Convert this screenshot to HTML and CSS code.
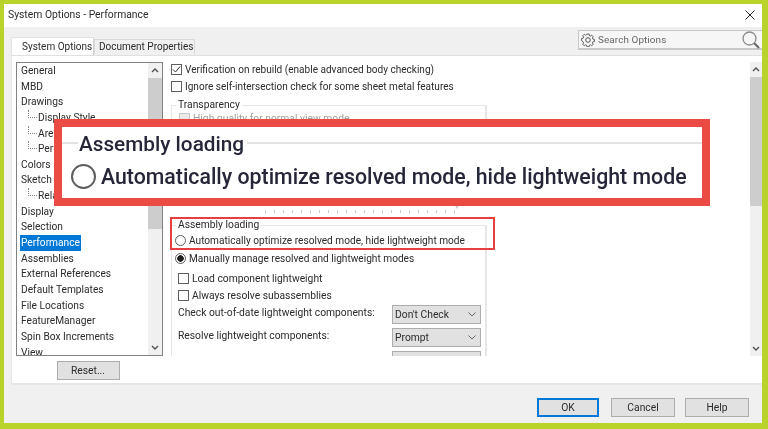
FILE: index.html
```html
<!DOCTYPE html>
<html lang="en">
<head>
<meta charset="utf-8">
<title>System Options - Performance</title>
<link rel="stylesheet" href="styles.css">
</head>
<body>
<div class="window">
  <header class="titlebar">
    <span>System Options - Performance</span>
    <svg class="close" viewBox="0 0 10 10" width="10" height="10"><path d="M0.5 0.5L9.5 9.5M9.5 0.5L0.5 9.5" stroke="#222" stroke-width="1" fill="none"/></svg>
  </header>
  <div class="tabrow">
    <div class="tab active">System Options</div>
    <div class="tab">Document Properties</div>
    <div class="search">
      <svg class="gear" viewBox="0 0 14 14" width="14" height="14"><path d="M5.8 1h2.4l.3 1.7 1.1.5 1.5-1 1.6 1.7-1 1.4.5 1.1 1.7.3v2.4l-1.7.3-.5 1.1 1 1.5-1.7 1.6-1.4-1-1.1.5-.3 1.6H5.800l-.3-1.6-1.100-.5-1.500 1-1.600-1.700 1-1.400-.5-1.100L.1 8.200V5.800l1.700-.3.5-1.100-1-1.500L3 1.200l1.400 1 1.100-.5z" transform="translate(.5 .1) scale(.93)" fill="none" stroke="#555" stroke-width="1"/><circle cx="7" cy="7" r="2.300" fill="none" stroke="#555" stroke-width="1"/></svg>
      <span class="search-text">Search Options</span>
      <svg class="lens" viewBox="0 0 18 18" width="18" height="18"><circle cx="7.500" cy="7.500" r="6.500" fill="none" stroke="#8a8a8a" stroke-width="1.300"/><path d="M12.300 12.300L17 17" stroke="#666" stroke-width="2"/></svg>
    </div>
  </div>
  <section class="panel">
    <div class="left">
      <div class="list">
        <ul class="tree">
          <li>General</li>
          <li>MBD</li>
          <li>Drawings</li>
          <li class="sub">Display Style</li>
          <li class="sub">Area Hatch/Fill</li>
          <li class="sub">Performance</li>
          <li>Colors</li>
          <li>Sketch</li>
          <li class="sub">Relations/Snaps</li>
          <li>Display</li>
          <li>Selection</li>
          <li><span class="selected">Performance</span></li>
          <li>Assemblies</li>
          <li>External References</li>
          <li>Default Templates</li>
          <li>File Locations</li>
          <li>FeatureManager</li>
          <li>Spin Box Increments</li>
          <li>View</li>
        </ul>
        <div class="scrollbar short">
          <svg class="arrow" viewBox="0 0 8 5" width="8" height="5"><path d="M1 4L4 1L7 4" fill="none" stroke="#505050" stroke-width="1.400"/></svg>
          <div class="thumb list-thumb"></div>
          <svg class="arrow end" viewBox="0 0 8 5" width="8" height="5"><path d="M1 1L4 4L7 1" fill="none" stroke="#505050" stroke-width="1.400"/></svg>
        </div>
      </div>
      <button class="btn reset">Reset...</button>
    </div>
    <div class="main">
      <div class="options">
        <label class="row first"><i class="check on"><svg viewBox="0 0 11 11" width="11" height="11"><path d="M2 5.500L4.500 8L9 2.500" fill="none" stroke="#333" stroke-width="1"/></svg></i>Verification on rebuild (enable advanced body checking)</label>
        <label class="row second"><i class="check"></i>Ignore self-intersection check for some sheet metal features</label>
        <fieldset class="group transparency">
          <legend>Transparency</legend>
          <label class="row faded"><i class="check dim"></i>High quality for normal view mode</label>
          <div class="ticks"></div>
          <div class="tick-mark"></div>
        </fieldset>
        <fieldset class="group assembly">
          <legend>Assembly loading</legend>
          <label class="row radio-row"><i class="radio"></i>Automatically optimize resolved mode, hide lightweight mode</label>
          <label class="row radio-row two"><i class="radio on"></i>Manually manage resolved and lightweight modes</label>
          <label class="row inner load"><i class="check"></i>Load component lightweight</label>
          <label class="row inner always"><i class="check"></i>Always resolve subassemblies</label>
          <div class="field check-field"><span>Check out-of-date lightweight components:</span><div class="select">Don't Check<svg viewBox="0 0 8 5" width="8" height="5"><path d="M.5 .5L4 4L7.500 .5" fill="none" stroke="#666" stroke-width="1"/></svg></div></div>
          <div class="field"><span>Resolve lightweight components:</span><div class="select">Prompt<svg viewBox="0 0 8 5" width="8" height="5"><path d="M.5 .5L4 4L7.500 .5" fill="none" stroke="#666" stroke-width="1"/></svg></div></div>
          <div class="field"><span></span><div class="select"></div></div>
        </fieldset>
      </div>
      <div class="scrollbar">
        <svg class="arrow" viewBox="0 0 8 5" width="8" height="5"><path d="M1 4L4 1L7 4" fill="none" stroke="#505050" stroke-width="1.400"/></svg>
        <div class="thumb main-thumb"></div>
        <svg class="arrow end" viewBox="0 0 8 5" width="8" height="5"><path d="M1 1L4 4L7 1" fill="none" stroke="#505050" stroke-width="1.400"/></svg>
      </div>
    </div>
  </section>
  <footer class="footer">
    <button class="btn ok">OK</button>
    <button class="btn">Cancel</button>
    <button class="btn">Help</button>
  </footer>
</div>
<div class="highlight"></div>
<aside class="callout">
  <div class="callout-legend"><span>Assembly loading</span></div>
  <div class="callout-option"><i class="callout-radio"></i>Automatically optimize resolved mode, hide lightweight mode</div>
</aside>
</body>
</html>
```
FILE: styles.css
```css
* { box-sizing: border-box; }
html, body { margin: 0; height: 429px; overflow: hidden; }
body {
  position: relative;
  background: #b9d32b;
  padding: 4px 6px 6px 4px;
  font-family: Roboto, "Open Sans", sans-serif;
  font-size: 10.3px;
  color: #2b2b2b;
  filter: blur(.3px);
}
.window { height: 419px; background: #f0f0f0; display: flex; flex-direction: column; }
.titlebar {
  height: 23px; flex: none; background: #fff; padding: 0 4px 2px;
  display: flex; align-items: center; justify-content: space-between;
  font-size: 10.35px;
}
.close { margin-right: 3px; }
.tabrow { height: 28px; flex: none; display: flex; align-items: flex-end; padding-left: 7px; font-size: 10px; }
.tab {
  height: 15px; padding: 0 1px 0 4px; background: #f0f0f0; white-space: nowrap;
  border: 1px solid #d9d9d9; border-bottom: 0;
  line-height: 14px; margin-bottom: 1px;
}
.tab.active { height: 18px; width: 83px; background: #fff; margin-bottom: 0; padding: 0 0 0 10px; line-height: 17px; border-color: #e2e2e2; border-right-color: #d4d4d4; }
.search {
  margin-left: auto; align-self: flex-start; margin-top: 3px; width: 184px; height: 20px;
  background: #f6f6f6; border: 1px solid #c8c8c8; border-right: 0; border-bottom-width: 2px;
  display: flex; align-items: center; padding: 0 2px; color: #666; font-size: 9.9px;
}
.search-text { margin-left: 3px; letter-spacing: .1px; }
.lens { margin-left: auto; }
.panel {
  height: 330px; flex: none; margin-left: 7px; background: #fff;
  border-top: 1px solid #e0e0e0; border-left: 1px solid #e6e6e6; border-bottom: 2px solid #e6e6e6;
  display: flex; padding: 6px 0 0 4px;
}
.left { width: 147px; flex: none; display: flex; flex-direction: column; }
.list { height: 294px; flex: none; border: 1px solid #828282; display: flex; overflow: hidden; }
.tree { flex: 1; list-style: none; margin: 0; padding: 0 0 0 4px; overflow: hidden; font-size: 10.2px; }
.tree li { height: 15.65px; line-height: 15.65px; white-space: nowrap; }
.tree li.sub { padding-left: 17px; position: relative; overflow: hidden; }
.tree li.sub::before {
  content: ""; position: absolute; left: 7px; top: 7px; width: 9px; border-top: 1px dotted #888;
}
.tree li.sub::after {
  content: ""; position: absolute; left: 7px; top: 0; height: 8px; border-left: 1px dotted #888;
}
.selected { display: inline-block; background: #0078d7; color: #fff; padding: 0 1px; margin-left: -1px; height: 15.65px; }
.scrollbar { width: 12px; flex: none; background: #f0f0f0; display: flex; flex-direction: column; align-items: center; }
.short { height: 292px; width: 14px; }
.arrow { margin-top: 5px; flex: none; }
.arrow.end { margin-top: auto; margin-bottom: 5px; }
.thumb { width: 100%; background: #cdcdcd; margin-top: 5px; flex: none; }
.list-thumb { height: 151px; }
.main-thumb { height: 129px; }
.reset { align-self: center; margin-top: 5px; margin-left: -3px; }
.btn {
  width: 63px; height: 19px; padding: 0; background: #e1e1e1; border: 1px solid #adadad;
  font: inherit; color: #2b2b2b; line-height: 15px;
}
.main { flex: 1; height: 294px; display: flex; margin-left: 1px; min-width: 0; overflow: hidden; }
.options { flex: 1; padding-left: 7px; overflow: hidden; min-width: 0; }
.row { display: flex; align-items: center; white-space: nowrap; height: 12px; }
.first { margin-top: 1px; font-size: 10.05px; }
.second { margin-top: 5px; font-size: 10.05px; }
.check { width: 11px; height: 11px; border: 1px solid #5e5e5e; background: #fff; flex: none; margin-right: 3px; display: block; position: relative; }
.check svg { position: absolute; left: -1px; top: -1px; }
.check.dim { border-color: #c9c9c9; background: #e9e9e9; }
.faded { color: #a0a0a0; }
.group { width: 316px; margin: 0; padding: 0 0 0 7px; border: 2px solid #e6e6e6; border-width: 1px 2px 2px 1px; display: block; min-width: 0; }
.group legend { padding: 0 2px; line-height: 14px; }
.transparency { margin-top: 6px; height: 98px; position: relative; }
.transparency legend { margin-left: -3px; }
.ticks { position: absolute; left: 93px; top: 98px; width: 192px; height: 3px; background: repeating-linear-gradient(90deg, #c8c8c8 0 1px, transparent 1px 9px); }
.tick-mark { position: absolute; left: 282px; top: 92px; border: 3px solid transparent; border-top: 5px solid #cfcfcf; border-bottom: 0; }
.assembly { margin-top: 22px; height: 150px; padding-left: 3px; overflow: hidden; }
.assembly legend { margin-left: 1px; }
.radio-row { margin-top: 1px; height: 14px; font-size: 10.15px; }
.radio-row.two { margin-top: 4px; }
.radio { width: 11px; height: 11px; border: 1px solid #5e5e5e; border-radius: 50%; background: #fff; flex: none; margin-right: 3px; display: block; }
.radio.on { background: radial-gradient(circle, #222 0 3px, #fff 3.5px); }
.inner { margin-left: 3px; margin-top: 5px; }
.inner.load { margin-top: 7px; }
.field { display: flex; justify-content: space-between; align-items: flex-start; margin-left: 3px; width: 303px; height: 23px; }
.field span { white-space: nowrap; line-height: 14px; padding-top: 1px; }
.check-field { margin-top: 4px; }
.select {
  width: 89px; height: 19px; flex: none; background: #e1e1e1; border: 1px solid #adadad;
  padding: 0 4px 0 2px; display: flex; align-items: center; justify-content: space-between;
}
.footer { flex: 1; display: flex; justify-content: flex-end; align-items: flex-start; gap: 10px; padding: 13px 13px 0 0; }
.footer .btn { width: 64px; }
.footer .ok { width: 62px; margin-right: 2px; border: 2px solid #0078d7; }
.highlight { position: absolute; left: 170px; top: 217px; width: 325px; height: 33px; border: 2px solid #e5403d; }
.callout {
  position: absolute; left: 54px; top: 119px; width: 656px; height: 87px;
  background: #fff; border: 8.500px solid #ec4a45; color: #26263a;
  font-size: 21.300px; font-weight: 500; display: flex; flex-direction: column;
}
.callout-legend { height: 32px; display: flex; align-items: center; position: relative; padding-left: 16px; }
.callout-legend::before { content: ""; position: absolute; left: 0; right: 0; top: 15px; height: 2px; background: #e3e3e3; }
.callout-legend span { position: relative; background: #fff; padding: 0 3px 0 1px; font-size: 20.750px; top: 1px; }
.callout-option { display: flex; align-items: center; padding-left: 9px; white-space: nowrap; margin-top: 5px; }
.callout-radio { width: 25px; height: 25px; border: 2px solid #5e5e5e; border-radius: 50%; margin-right: 5px; flex: none; display: block; }
```
